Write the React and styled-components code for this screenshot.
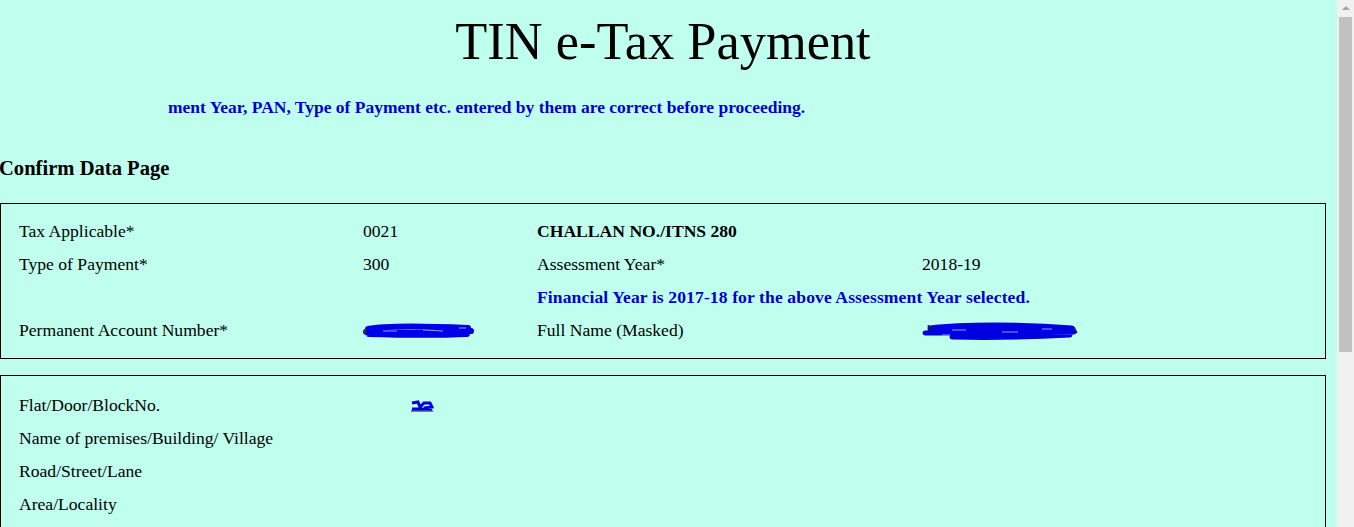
import React from 'react';
import styled, { createGlobalStyle } from 'styled-components';

const GlobalStyle = createGlobalStyle`
	html, body {
		margin: 0;
		padding: 0;
		height: 100%;
		overflow: hidden;
		background: #c0ffee;
	}
	#root {
		height: 100%;
	}
`;

const taxRows = [
	{ label: 'Tax Applicable*', value: '0021', right: 'CHALLAN NO./ITNS 280', strong: true },
	{ label: 'Type of Payment*', value: '300', right: 'Assessment Year*', rightValue: '2018-19' },
	{ note: 'Financial Year is 2017-18 for the above Assessment Year selected.' },
	{ label: 'Permanent Account Number*', blob: 'pan', right: 'Full Name (Masked)', rightBlob: 'name' },
];

const addressRows = [
	{ label: 'Flat/Door/BlockNo.', blob: 'flat' },
	{ label: 'Name of premises/Building/ Village' },
	{ label: 'Road/Street/Lane' },
	{ label: 'Area/Locality' },
];

// blue marker scribbles that hide personal data in the reference
const Scribble = ({ kind }) => {
	if (kind === 'pan') {
		return (
			<svg width="112" height="16" viewBox="0 0 112 16">
				<path d="M5 6 C20 3, 60 3, 105 5 M3 9 C30 11, 70 10, 108 8 M6 11 C40 12, 80 12, 104 11" stroke="#0000e6" strokeWidth="6" fill="none" strokeLinecap="round" />
				<path d="M20 8 L34 8 M60 7 L80 8 M96 5 L103 5" stroke="#8a9cff" strokeWidth="1" />
				<path d="M2 6 L2 11" stroke="#333" strokeWidth="2" />
			</svg>
		);
	}
	if (kind === 'name') {
		return (
			<svg width="158" height="20" viewBox="0 0 158 20">
				<path d="M8 7 C40 3, 100 3, 150 7 M3 12 C50 12, 110 11, 152 11 M30 16 C70 17, 110 16, 148 14 M8 9 C60 8, 120 9, 150 9" stroke="#0000e0" strokeWidth="5" fill="none" strokeLinecap="round" />
				<path d="M30 9 L44 9 M80 11 L96 11 M120 8 L130 8 M20 14 L28 14" stroke="#8a9cff" strokeWidth="1" />
				<path d="M6 4 L9 10 M152 6 L155 12" stroke="#222" strokeWidth="1.5" />
			</svg>
		);
	}
	return (
		<svg width="24" height="14" viewBox="0 0 24 14">
			<path d="M2 4 L8 3 L10 8 L14 4 L20 4 L22 8 L14 9 M2 10 L22 10" stroke="#0000e0" strokeWidth="3" fill="none" />
			<path d="M1 12 L23 12" stroke="#000066" strokeWidth="1" />
		</svg>
	);
};

const App = () => {
	return (
		<>
			<GlobalStyle />
			<Page>
				<Content>
					<Title>TIN e-Tax Payment</Title>
					<Marquee>ment Year, PAN, Type of Payment etc. entered by them are correct before proceeding.</Marquee>
					<Heading>Confirm Data Page</Heading>
					<Box>
						<TaxGrid>
							{taxRows.map((row, index) =>
								row.note ? (
									<React.Fragment key={index}>
										<Cell />
										<Cell />
										<Note>{row.note}</Note>
									</React.Fragment>
								) : (
									<React.Fragment key={index}>
										<Cell>{row.label}</Cell>
										<Cell>{row.blob ? <Scribble kind={row.blob} /> : row.value}</Cell>
										<Cell strong={row.strong}>{row.right}</Cell>
										<Cell>{row.rightBlob ? <Scribble kind={row.rightBlob} /> : row.rightValue}</Cell>
									</React.Fragment>
								)
							)}
						</TaxGrid>
					</Box>
					<Box open>
						<AddressGrid>
							{addressRows.map((row, index) => (
								<React.Fragment key={index}>
									<Cell>{row.label}</Cell>
									<Cell>{row.blob ? <Scribble kind={row.blob} /> : null}</Cell>
								</React.Fragment>
							))}
						</AddressGrid>
					</Box>
				</Content>
				<Scrollbar>
					<Arrow />
					<Thumb />
				</Scrollbar>
			</Page>
		</>
	);
};

export default App;

const Page = styled.div`
	display: flex;
	height: 100%;
`;

const Content = styled.main`
	flex: 1;
	min-width: 0;
	overflow: hidden;
	padding-right: 11px;
	font-family: 'Liberation Serif', 'Times New Roman', serif;
	color: #000;
`;

const Title = styled.h1`
	margin: 0;
	padding-top: 11px;
	height: 60px;
	text-align: center;
	font-size: 52.4px;
	font-weight: 400;
	line-height: 60px;
`;

const Marquee = styled.div`
	margin: 26px 0 0 168px;
	height: 20px;
	line-height: 20px;
	font-size: 17.5px;
	font-weight: 700;
	color: #0000cd;
	white-space: nowrap;
`;

const Heading = styled.h3`
	margin: 40px 0 0 -1px;
	font-size: 20.6px;
	line-height: 22px;
	font-weight: 700;
`;

const Box = styled.section`
	margin-top: ${props => (props.open ? '16px' : '24px')};
	border: 1px solid #000;
	border-bottom: ${props => (props.open ? 'none' : '1px solid #000')};
	padding: ${props => (props.open ? '13px 18px 11px' : '11px 18px')};
`;

const TaxGrid = styled.div`
	display: grid;
	grid-template-columns: 344px 174px 385px 1fr;
	grid-auto-rows: 33px;
	align-items: center;
	font-size: 17.6px;
`;

const AddressGrid = styled.div`
	display: grid;
	grid-template-columns: 391px 1fr;
	grid-auto-rows: 33px;
	align-items: center;
	font-size: 17.6px;
`;

const Cell = styled.div`
	display: flex;
	align-items: center;
	font-weight: ${props => (props.strong ? 700 : 400)};
	white-space: nowrap;
`;

const Note = styled.div`
	grid-column: 3 / span 2;
	font-size: 17.6px;
	letter-spacing: 0.1px;
	font-weight: 700;
	color: #0000cd;
	white-space: nowrap;
`;

const Scrollbar = styled.div`
	width: 17px;
	flex: none;
	background: #f1f1f1;
	display: flex;
	flex-direction: column;
	align-items: center;
`;

const Arrow = styled.div`
	margin-top: 6px;
	width: 0;
	height: 0;
	border-left: 4px solid transparent;
	border-right: 4px solid transparent;
	border-bottom: 4px solid #a3a3a3;
`;

const Thumb = styled.div`
	margin-top: 7px;
	width: 13px;
	height: 335px;
	background: #c1c1c1;
`;
